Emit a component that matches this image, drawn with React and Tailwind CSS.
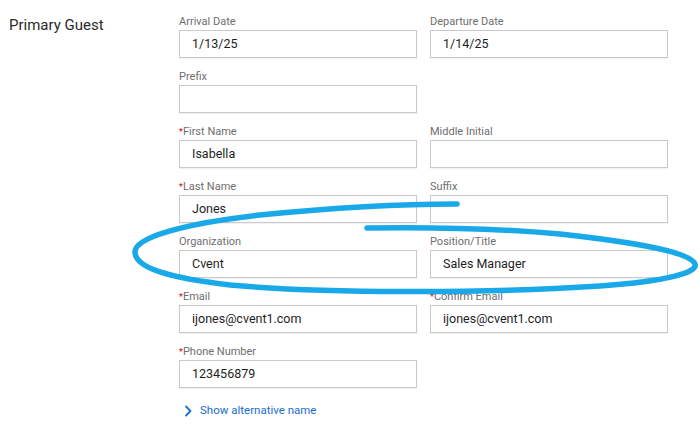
import React from 'react';

const rows = [
  [{ label: 'Arrival Date', value: '1/13/25' }, { label: 'Departure Date', value: '1/14/25' }],
  [{ label: 'Prefix', value: '' }, null],
  [{ label: 'First Name', value: 'Isabella', required: true }, { label: 'Middle Initial', value: '' }],
  [{ label: 'Last Name', value: 'Jones', required: true }, { label: 'Suffix', value: '' }],
  [{ label: 'Organization', value: 'Cvent' }, { label: 'Position/Title', value: 'Sales Manager' }],
  [{ label: 'Email', value: 'ijones@cvent1.com', required: true }, { label: 'Confirm Email', value: 'ijones@cvent1.com', required: true }],
  [{ label: 'Phone Number', value: '123456879', required: true }, null],
];

function Field({ field }) {
  if (!field) return <div />;
  return (
    <div className="flex flex-col">
      <label className="h-[16px] pt-[2px] text-[11px] leading-[14px] text-[#6e6e6e]">
        {field.required && <span className="text-[#d0021b] text-[9px] align-top">*</span>}
        {field.label}
      </label>
      <div className="mt-[1px] h-[28px] border border-[#c9c9c9] bg-white px-3 flex items-center text-[12.5px] text-[#1e1e1e] shadow-[0_1px_1px_rgba(0,0,0,0.05)]">
        {field.value}
      </div>
    </div>
  );
}

export default function App() {
  return (
    <div className="relative w-[700px] h-[435px] bg-white overflow-hidden" style={{ fontFamily: 'Roboto, "Liberation Sans", sans-serif' }}>
      <div className="flex">
        <div className="w-[179px] pl-[9px] pt-[14px] text-[15px] text-[#2b2b2b]">Primary Guest</div>
        <div className="w-[490px] pt-[13px]">
          {rows.map((row, i) => (
            <div key={i} className="grid grid-cols-[238px_238px] gap-x-[13px] mb-[10px]">
              <Field field={row[0]} />
              <Field field={row[1]} />
            </div>
          ))}
          <div className="flex items-center gap-[7px] pl-[4px] mt-[14px] text-[11.5px] text-[#1a6dd1]">
            <svg width="10" height="12" viewBox="0 0 10 12" fill="none">
              <path d="M3 1.5 L7.5 6 L3 10.5" stroke="#1a6dd1" strokeWidth="1.8" strokeLinecap="round" strokeLinejoin="round" />
            </svg>
            <span>Show alternative name</span>
          </div>
        </div>
      </div>
      <svg className="absolute inset-0 pointer-events-none" width="700" height="435" viewBox="0 0 700 435">
        <path
          d="M457,204 C400,204 330,208 260,215 C180,224 135,238 135,252 C135,268 170,278 230,285 C320,293 480,294 600,286 C670,281 698,272 695,264 C690,252 640,243 560,234 C490,228 420,227 367,228"
          fill="none"
          stroke="#19a9e8"
          strokeWidth="5.5"
          strokeLinecap="round"
        />
      </svg>
    </div>
  );
}
